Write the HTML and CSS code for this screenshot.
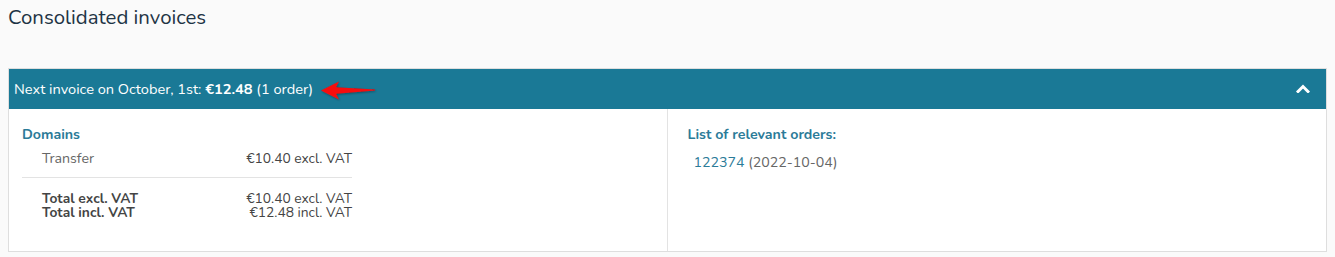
FILE: index.html
```html
<!DOCTYPE html>
<html>
<head>
<meta charset="utf-8">
<link rel="stylesheet" href="styles.css">
</head>
<body>
<h1 class="title">Consolidated invoices</h1>
<div class="panel">
  <div class="panel-head">
    <div class="head-text">Next invoice on October, 1st: <b>€12.48</b> (1 order)</div>
    <svg class="arrow" width="60" height="26" viewBox="0 0 60 26">
      <defs><filter id="sh" x="-20%" y="-40%" width="140%" height="180%"><feDropShadow dx="0.8" dy="1" stdDeviation="1" flood-color="#000" flood-opacity="0.35"/></filter></defs>
      <polygon points="2,13.5 20,4.5 17,10.3 56,12.6 56,13.4 17,16.7 20,22.5" fill="#f60a0a" filter="url(#sh)"/>
    </svg>
    <svg class="chev" width="14" height="9" viewBox="0 0 14 9">
      <polyline points="2,7.5 7,2.5 12,7.5" fill="none" stroke="#fff" stroke-width="3" stroke-linecap="square"/>
    </svg>
  </div>
  <div class="panel-body">
    <div class="col col-left">
      <div class="section-title">Domains</div>
      <div class="table">
        <div class="row item">
          <span class="label">Transfer</span>
          <span class="value">€10.40 excl. VAT</span>
        </div>
        <div class="totals">
          <div class="row">
            <span class="label">Total excl. VAT</span>
            <span class="value">€10.40 excl. VAT</span>
          </div>
          <div class="row">
            <span class="label">Total incl. VAT</span>
            <span class="value">€12.48 incl. VAT</span>
          </div>
        </div>
      </div>
    </div>
    <div class="col col-right">
      <div class="section-title">List of relevant orders:</div>
      <div class="order"><a class="order-link" href="#">122374</a> <span class="date">(2022-10-04)</span></div>
    </div>
  </div>
</div>
</body>
</html>
```

FILE: styles.css
```css
html, body {
  margin: 0;
  padding: 0;
  background: #fafafa;
}
body {
  padding: 0 8px;
  font-family: "Nunito", "Lato", "Noto Sans", sans-serif;
  color: #555;
}
.title {
  margin: 0;
  padding-top: 4px;
  font-size: 20.4px;
  line-height: 26px;
  font-weight: 400;
  color: #1e3445;
  height: 68px;
  box-sizing: border-box;
}
.panel {
  border: 1px solid #dedede;
  background: #fff;
}
.panel-head {
  height: 40px;
  background: #1a7996;
  display: flex;
  align-items: center;
  padding: 0 16px 0 5px;
  color: #fff;
  font-size: 14.6px;
}
.head-text {
  white-space: nowrap;
}
.head-text b {
  font-weight: 700;
}
.arrow {
  margin-left: 6px;
  margin-top: 1px;
}
.chev {
  margin-left: auto;
  margin-top: -2px;
}
.panel-body {
  display: grid;
  grid-template-columns: 1fr 1fr;
  height: 142px;
}
.col {
  box-sizing: border-box;
  min-width: 0;
}
.col-left {
  padding: 17px 13px 0 13px;
  border-right: 1px solid #e3e3e3;
}
.col-right {
  padding: 17px 20px 0 20px;
}
.section-title {
  font-size: 14.2px;
  font-weight: 700;
  color: #2b7b98;
  line-height: 18px;
}
.table {
  width: 330px;
  font-size: 13.8px;
}
.row {
  display: flex;
  justify-content: space-between;
  padding-left: 20px;
}
.item {
  color: #666;
  line-height: 18px;
  padding-top: 6px;
  padding-bottom: 9px;
  border-bottom: 1px solid #e3e3e3;
}
.item .label {
  font-size: 14.2px;
}
.item .value {
  color: #444;
}
.totals {
  padding-top: 14px;
  color: #444;
}
.totals .row {
  line-height: 14px;
}
.totals .label {
  font-weight: 700;
}
.order {
  font-size: 14.2px;
  line-height: 18px;
  padding-top: 10px;
  padding-left: 6px;
}
.order-link {
  color: #2b7b98;
  text-decoration: none;
}
.date {
  color: #666;
}
```
